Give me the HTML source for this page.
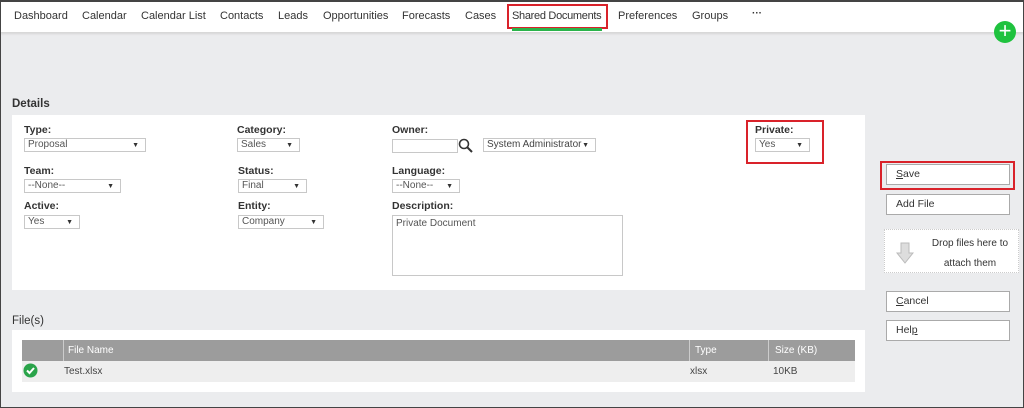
<!DOCTYPE html><html><head><style>
*{box-sizing:border-box;margin:0;padding:0}
body{width:1024px;height:408px;background:#ebecee;font-family:"Liberation Sans",sans-serif;font-size:11px;color:#333;position:relative;overflow:hidden}
.frame{position:absolute;left:0;top:0;width:1024px;height:408px;border:1px solid #444;border-top:2px solid #444;pointer-events:none}
.nav{position:absolute;left:0;top:0;width:1024px;height:32px;background:#fff;box-shadow:0 2px 2px #d6d6d6}
.nav span{position:absolute;top:10px;font-size:11px;color:#333;white-space:nowrap}
.a{position:absolute;white-space:nowrap}
.lbl{position:absolute;font-weight:bold;font-size:10.5px;color:#333}
.sel{position:absolute;height:14px;border:1px solid #c8c8c8;background:#fff;font-size:10px;color:#555;padding-left:3px;line-height:12px;white-space:nowrap;overflow:hidden}
.sel:after{content:"▼";position:absolute;right:6px;top:1px;font-size:7px;color:#333}
.btn{position:absolute;left:886px;width:124px;height:21px;border:1px solid #aaa;background:#fff;font-size:10.5px;padding-left:9px;line-height:19px;color:#333}
.red{position:absolute;border:2px solid #d9222a}
</style></head><body>
<div class="nav">
<span style="left:14px">Dashboard</span><span style="left:82px">Calendar</span><span style="left:141px">Calendar List</span><span style="left:220px">Contacts</span><span style="left:278px">Leads</span><span style="left:323px">Opportunities</span><span style="left:402px">Forecasts</span><span style="left:465px">Cases</span><span style="left:512px;letter-spacing:-0.3px">Shared Documents</span><span style="left:618px">Preferences</span><span style="left:692px">Groups</span><span style="left:752px;top:8px;font-weight:bold;font-size:10px">···</span>
</div>
<div class="red" style="left:507px;top:4px;width:101px;height:25px"></div>
<div class="a" style="left:512px;top:28px;width:90px;height:3px;background:#2ab34a"></div>
<div class="a" style="left:994px;top:21px;width:22px;height:22px;border-radius:50%;background:#1fc23e;color:#fff;font-size:22px;line-height:20px;text-align:center">+</div>
<div class="lbl" style="left:12px;top:98px;font-size:11.5px">Details</div>
<div class="a" style="left:12px;top:115px;width:853px;height:175px;background:#fff"></div>
<div class="lbl" style="left:24px;top:124px">Type:</div><div class="sel" style="left:24px;top:138px;width:122px">Proposal</div>
<div class="lbl" style="left:24px;top:165px">Team:</div><div class="sel" style="left:24px;top:179px;width:97px">--None--</div>
<div class="lbl" style="left:24px;top:200px">Active:</div><div class="sel" style="left:24px;top:215px;width:56px">Yes</div>
<div class="lbl" style="left:237px;top:124px">Category:</div><div class="sel" style="left:237px;top:138px;width:63px">Sales</div>
<div class="lbl" style="left:238px;top:165px">Status:</div><div class="sel" style="left:238px;top:179px;width:69px">Final</div>
<div class="lbl" style="left:238px;top:200px">Entity:</div><div class="sel" style="left:238px;top:215px;width:86px">Company</div>
<div class="lbl" style="left:392px;top:124px">Owner:</div>
<div class="a" style="left:392px;top:139px;width:66px;height:14px;border:1px solid #c8c8c8"></div>
<svg class="a" style="left:458px;top:138px" width="16" height="16"><circle cx="6" cy="6" r="4.5" fill="none" stroke="#333" stroke-width="1.6"/><path d="M9.5 9.5L14 14" stroke="#333" stroke-width="2"/></svg>
<div class="sel" style="left:483px;top:138px;width:113px;color:#444;padding-right:14px">System Administrator</div>
<div class="lbl" style="left:392px;top:165px">Language:</div><div class="sel" style="left:392px;top:179px;width:68px">--None--</div>
<div class="lbl" style="left:392px;top:200px">Description:</div>
<div class="a" style="left:392px;top:215px;width:231px;height:61px;border:1px solid #c8c8c8;font-size:10px;color:#555;padding:2px 3px">Private Document</div>
<div class="lbl" style="left:755px;top:124px">Private:</div><div class="sel" style="left:755px;top:138px;width:55px">Yes</div>
<div class="red" style="left:746px;top:120px;width:78px;height:44px"></div>
<div class="red" style="left:880px;top:161px;width:135px;height:29px"></div>
<div class="btn" style="top:164px"><u>S</u>ave</div>
<div class="btn" style="top:194px">Add File</div>
<div class="a" style="left:884px;top:229px;width:135px;height:44px;border:1px dotted #ccc;background:#fff"></div>
<svg class="a" style="left:896px;top:242px" width="18" height="22"><path d="M5 1h8v10h4l-8 10-8-10h4z" fill="#ddd" stroke="#bbb"/></svg>
<div class="a" style="left:925px;top:234px;width:90px;text-align:center;font-size:10px;line-height:20px;color:#333;white-space:normal">Drop files here to attach them</div>
<div class="btn" style="top:291px"><u>C</u>ancel</div>
<div class="btn" style="top:320px">Hel<u>p</u></div>
<div class="lbl" style="left:12px;top:315px;font-size:11.5px;font-weight:normal">File(s)</div>
<div class="a" style="left:12px;top:330px;width:853px;height:62px;background:#fff"></div>
<div class="a" style="left:22px;top:340px;width:833px;height:21px;background:#9c9c9c"></div>
<div class="a" style="left:22px;top:361px;width:833px;height:21px;background:#eeeeee"></div>
<div class="a" style="left:63px;top:340px;width:1px;height:21px;background:#ccc"></div>
<div class="a" style="left:689px;top:340px;width:1px;height:21px;background:#ccc"></div>
<div class="a" style="left:768px;top:340px;width:1px;height:21px;background:#ccc"></div>
<div class="a" style="left:68px;top:345px;color:#fff;font-size:10px">File Name</div>
<div class="a" style="left:695px;top:345px;color:#fff;font-size:10px">Type</div>
<div class="a" style="left:775px;top:345px;color:#fff;font-size:10px">Size (KB)</div>
<svg class="a" style="left:23px;top:363px" width="15" height="15"><circle cx="7.5" cy="7.5" r="7" fill="#2aa44a"/><path d="M4 7.5l2.5 2.5 4.5-5" fill="none" stroke="#fff" stroke-width="2"/></svg>
<div class="a" style="left:64px;top:366px;font-size:10px;color:#444">Test.xlsx</div>
<div class="a" style="left:690px;top:366px;font-size:10px;color:#444">xlsx</div>
<div class="a" style="left:773px;top:366px;font-size:10px;color:#444">10KB</div>
<div class="frame"></div>
</body></html>
